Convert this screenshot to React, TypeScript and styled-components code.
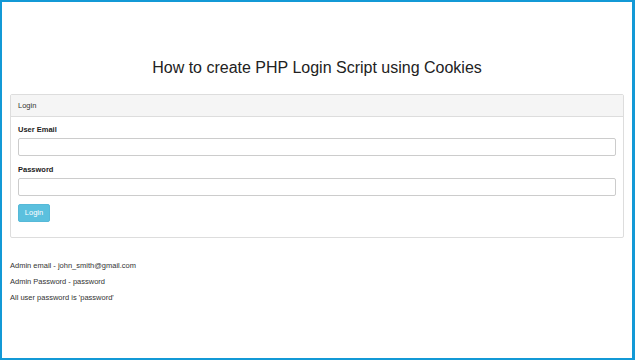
import React from "react";
import styled, { createGlobalStyle } from "styled-components";

const Global = createGlobalStyle`
  html, body { margin: 0; padding: 0; background: #fff; }
  * { box-sizing: border-box; }
  body { font-family: "Liberation Sans", Arial, sans-serif; color: #333; }
`;

const Frame = styled.div`
  width: 635px;
  height: 360px;
  border-style: solid;
  border-color: #1399d6;
  border-width: 2px 3px 2px 2px;
  padding: 0 8px;
  overflow: hidden;
  background: #fff;
`;

const Title = styled.h1`
  margin: 56px 0 16px;
  font-size: 16px;
  line-height: 20px;
  font-weight: 400;
  text-align: center;
  color: #222;
`;

const Panel = styled.section`
  border: 1px solid #dddddd;
  border-radius: 2px;
  background: #fff;
`;

const PanelHeader = styled.div`
  height: 22px;
  background: #f5f5f5;
  border-bottom: 1px solid #dddddd;
  padding: 0 7px;
  font-size: 7.5px;
  line-height: 21px;
  color: #333;
`;

const PanelBody = styled.form`
  padding: 7px 7px 15px;
  display: flex;
  flex-direction: column;
  align-items: flex-start;
`;

const Label = styled.label<{ $gap?: number }>`
  display: block;
  font-size: 7.5px;
  line-height: 12px;
  font-weight: 700;
  color: #222;
  margin-top: ${(p) => p.$gap ?? 0}px;
  margin-bottom: 2px;
`;

const Input = styled.input`
  display: block;
  width: 100%;
  height: 18px;
  border: 1px solid #cccccc;
  border-radius: 2px;
  background: #fff;
  padding: 0 6px;
  font-size: 7.5px;
  outline: none;
`;

const Button = styled.button`
  margin-top: 8px;
  width: 32px;
  height: 18px;
  border: 1px solid #56b9d8;
  border-radius: 2px;
  background: #5bc0de;
  color: #fff;
  font-family: inherit;
  font-size: 7.5px;
  line-height: 16px;
  padding: 0;
  cursor: pointer;
`;

const Notes = styled.div`
  margin-top: 20px;
`;

const Note = styled.p`
  margin: 0;
  font-size: 7.5px;
  line-height: 16px;
  color: #333;
`;

export default function App() {
  return (
    <>
      <Global />
      <Frame>
        <Title>How to create PHP Login Script using Cookies</Title>
        <Panel>
          <PanelHeader>Login</PanelHeader>
          <PanelBody onSubmit={(e) => e.preventDefault()}>
            <Label htmlFor="email">User Email</Label>
            <Input id="email" type="text" />
            <Label htmlFor="pw" $gap={8}>Password</Label>
            <Input id="pw" type="password" />
            <Button type="submit">Login</Button>
          </PanelBody>
        </Panel>
        <Notes>
          <Note>Admin email - john_smith@gmail.com</Note>
          <Note>Admin Password - password</Note>
          <Note>All user password is 'password'</Note>
        </Notes>
      </Frame>
    </>
  );
}
